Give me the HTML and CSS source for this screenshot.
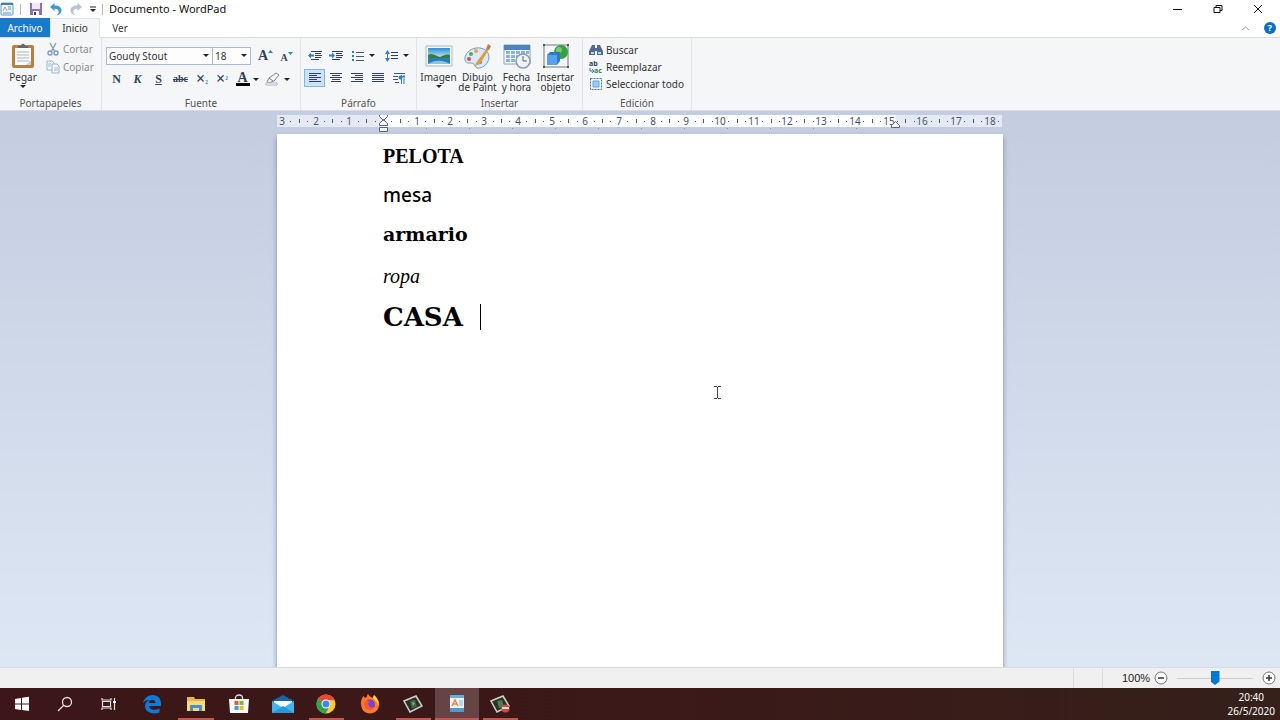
FILE: index.html
```html
<!DOCTYPE html>
<html lang="es">
<head>
<meta charset="utf-8">
<title>Documento - WordPad</title>
<link rel="stylesheet" href="styles.css">
</head>
<body>
<header class="titlebar">
  <svg class="app-icon" viewBox="0 0 14 14" width="14" height="14"><rect x="1" y="1" width="12" height="12" rx="1" fill="#e9f4fb" stroke="#5d9cc8"/><path d="M1 2h12" stroke="#4b7ea3" stroke-width="2"/><path d="M3 9l2-4 2 4" fill="none" stroke="#e88f57"/><path d="M8 5h3M8 7h3M3 11h8" stroke="#5aa2d3"/></svg>
  <span class="bar-sep"></span>
  <button class="qat" aria-label="Guardar"><svg viewBox="0 0 14 14" width="14" height="14"><path d="M1 1h12v12H1z" fill="#8c70b4"/><path d="M3 1h8v6H3z" fill="#eeeaf6"/><path d="M4 9h6v4H4z" fill="#fff"/><path d="M5 10h2v3H5z" fill="#4d3c74"/></svg></button>
  <button class="qat" aria-label="Deshacer"><svg viewBox="0 0 14 14" width="14" height="14"><path d="M1 5l4.500-4v2.500c5 0 7 2 7 5 0 2.500-2 4.500-5 5 2-1.500 2.600-3 2-4.400C9 7.500 8 6.800 5.500 6.800V9z" fill="#3b9bd4"/></svg></button>
  <button class="qat" aria-label="Rehacer"><svg viewBox="0 0 14 14" width="14" height="14"><path d="M13 5L8.500 1v2.500c-5 0-7 2-7 5 0 2.500 2 4.500 5 5-2-1.500-2.600-3-2-4.400C5 7.500 6 6.800 8.500 6.800V9z" fill="#b9c3d0"/></svg></button>
  <button class="qat qat-more" aria-label="Personalizar"><svg viewBox="0 0 8 7" width="8" height="7"><path d="M1 1h6" stroke="#222"/><path d="M1 3h6L4 6z" fill="#222"/></svg></button>
  <span class="bar-sep"></span>
  <h1 class="title">Documento - WordPad</h1>
  <div class="window-buttons">
    <button aria-label="Minimizar"><svg viewBox="0 0 10 10" width="10" height="10"><path d="M0 5.500h9" stroke="#111"/></svg></button>
    <button aria-label="Restaurar"><svg viewBox="0 0 10 10" width="10" height="10"><path d="M1 3.500h6v5H1zM3 3V1.500h6v5H7" fill="none" stroke="#111"/></svg></button>
    <button aria-label="Cerrar"><svg viewBox="0 0 10 10" width="10" height="10"><path d="M1 1l8 8M9 1l-8 8" stroke="#111"/></svg></button>
  </div>
</header>

<nav class="tabs">
  <button class="tab tab-file">Archivo</button>
  <button class="tab tab-active">Inicio</button>
  <button class="tab">Ver</button>
  <div class="tab-tools">
    <button aria-label="Minimizar cinta"><svg viewBox="0 0 9 6" width="9" height="6"><path d="M1 5l3.500-3L8 5" fill="none" stroke="#999"/></svg></button>
    <button class="help" aria-label="Ayuda">?</button>
  </div>
</nav>

<section class="ribbon">
  <div class="group g-clip">
    <div class="group-body">
      <button class="big paste"><svg viewBox="0 0 24 26" width="24" height="26"><rect x="1" y="2" width="22" height="23" rx="2" fill="#b9803f"/><path d="M4 5h16v17H4z" fill="#fbfcfe"/><path d="M6 9h12M6 12h12M6 15h12M6 18h12" stroke="#aab4c4"/><path d="M15 22l5-5v5z" fill="#c8d2e0"/><path d="M7 5V3h3c0-3 4-3 4 0h3v2z" fill="#5f6670"/></svg><span>Pegar</span><i class="arrow"></i></button>
      <div class="stack clip-stack">
        <button class="line dim"><svg viewBox="0 0 14 14" width="14" height="14"><path d="M4 1l5 9M10 1L5 10" stroke="#8fa0b8" stroke-width="1.500"/><circle cx="4" cy="11" r="2" fill="none" stroke="#7b9cc6" stroke-width="1.400"/><circle cx="10" cy="11" r="2" fill="none" stroke="#7b9cc6" stroke-width="1.400"/></svg>Cortar</button>
        <button class="line dim"><svg viewBox="0 0 14 14" width="14" height="14"><path d="M1 1h5l2 2v7H1z" fill="#f5f8fc" stroke="#a3b0c4"/><path d="M6 4h5l2 2v7H6z" fill="#f5f8fc" stroke="#a3b0c4"/><path d="M2 4h3M2 6h3M8 8h4M8 10h4" stroke="#9fb8da"/></svg>Copiar</button>
      </div>
    </div>
    <h2>Portapapeles</h2>
  </div>

  <div class="group g-font">
    <div class="group-body rows">
      <div class="row">
        <label class="combo combo-font"><select aria-label="Fuente"><option>Goudy Stout</option></select><i class="arrow"></i></label>
        <label class="combo combo-size"><select aria-label="Tamaño"><option>18</option></select><i class="arrow"></i></label>
        <button class="tool grow serif">A<svg viewBox="0 0 5 4" width="5" height="4"><path d="M0 3l2.500-3L5 3z" fill="#2f7fc3"/></svg></button>
        <button class="tool shrink serif">A<svg viewBox="0 0 5 4" width="5" height="4"><path d="M0 0l2.500 3L5 0z" fill="#2f7fc3"/></svg></button>
      </div>
      <div class="row">
        <button class="tool serif b">N</button>
        <button class="tool serif k">K</button>
        <button class="tool serif u">S</button>
        <button class="tool serif st">abc</button>
        <button class="tool serif x">×<sub>₂</sub></button>
        <button class="tool serif x">×<sup>²</sup></button>
        <button class="tool wide serif colour"><span>A</span><i class="arrow"></i></button>
        <button class="tool wide" aria-label="Resaltar"><svg viewBox="0 0 16 14" width="16" height="14"><path d="M2 10l2-4 7-5 3 2-5 6-5 2z" fill="#f1f4f8" stroke="#7587a0"/><path d="M4 6l4 3" stroke="#7587a0"/><path d="M1 11h11v2H1z" fill="#fff" stroke="#b0b8c2"/></svg><i class="arrow"></i></button>
      </div>
    </div>
    <h2>Fuente</h2>
  </div>

  <div class="group g-par">
    <div class="group-body rows">
      <div class="row">
        <button class="tool" aria-label="Reducir sangría"><svg viewBox="0 0 14 12" width="14" height="12"><path d="M3 1.500h11M7 3.500h6M7 5.500h7M7 7.500h6M3 9.500h8" stroke="#34405a"/><path d="M0 5.500l3-3v2h3v2H3v2z" fill="#2f7fc3"/></svg></button>
        <button class="tool" aria-label="Aumentar sangría"><svg viewBox="0 0 14 12" width="14" height="12"><path d="M3 1.500h11M7 3.500h6M7 5.500h7M7 7.500h6M3 9.500h8" stroke="#34405a"/><path d="M6 5.500l-3-3v2H0v2h3v2z" fill="#2f7fc3"/></svg></button>
        <button class="tool wide" aria-label="Lista"><svg viewBox="0 0 14 12" width="14" height="12"><path d="M5 2.500h8M5 6.500h8M5 10.500h8" stroke="#4b5468"/><path d="M1 1h2v2H1zM1 5h2v2H1zM1 9h2v2H1z" fill="#2f7fc3"/></svg><i class="arrow"></i></button>
        <button class="tool wide spacing" aria-label="Interlineado"><svg viewBox="0 0 14 12" width="14" height="12"><path d="M6 2.500h7M6 5.500h7M6 8.500h7" stroke="#34405a"/><path d="M0 4l2.500-4L5 4H3v4h2l-2.500 4L0 8h2V4z" fill="#2f7fc3"/></svg><i class="arrow"></i></button>
      </div>
      <div class="row">
        <button class="tool on" aria-label="Izquierda"><svg viewBox="0 0 14 12" width="14" height="12"><path d="M1 1.500h12M1 3.500h8M1 5.500h12M1 7.500h8M1 9.500h12" stroke="#34405a"/></svg></button>
        <button class="tool" aria-label="Centrar"><svg viewBox="0 0 14 12" width="14" height="12"><path d="M1 1.500h12M3 3.500h8M1 5.500h12M3 7.500h8M2 9.500h10" stroke="#34405a"/></svg></button>
        <button class="tool" aria-label="Derecha"><svg viewBox="0 0 14 12" width="14" height="12"><path d="M1 1.500h12M5 3.500h8M1 5.500h12M5 7.500h8M1 9.500h12" stroke="#34405a"/></svg></button>
        <button class="tool" aria-label="Justificar"><svg viewBox="0 0 14 12" width="14" height="12"><path d="M1 1.500h12M1 3.500h12M1 5.500h12M1 7.500h12M1 9.500h12" stroke="#34405a"/></svg></button>
        <button class="tool" aria-label="Párrafo"><svg viewBox="0 0 14 12" width="14" height="12"><path d="M2 1.500h11M1 4.500h5M1 7.500h5M3 10.500h4" stroke="#4b5468"/><path d="M12 3v9M9.500 3v9M8 4.500h5" stroke="#2f7fc3"/><circle cx="8.500" cy="5.500" r="2" fill="#2f7fc3"/></svg></button>
      </div>
    </div>
    <h2>Párrafo</h2>
  </div>

  <div class="group g-ins">
    <div class="group-body">
      <button class="big"><svg viewBox="0 0 28 26" width="28" height="26"><defs><linearGradient id="sky" x1="0" y1="0" x2="0" y2="1"><stop offset="0" stop-color="#2d8fd5"/><stop offset="1" stop-color="#c9eaf4"/></linearGradient></defs><path d="M1 3h26v20H1z" fill="#f8fbfd" stroke="#a9b7c4"/><path d="M3 5h22v10H3z" fill="url(#sky)"/><path d="M3 12c4-3 8 1 12 2 4-2 7-3 10-2v4H3z" fill="#3d7846"/><path d="M3 15h22v6H3z" fill="#2a7cb7"/><path d="M3 21c6-4 12-4 18-2l4 2z" fill="#8dc5dc"/></svg><span>Imagen</span><i class="arrow"></i></button>
      <button class="big"><svg viewBox="0 0 28 26" width="28" height="26"><path d="M12 5C5 6 0 12 1 17c1 4 5 3 7 3 3 0 2 4 5 5 6 1 12-5 12-11 0-6-6-10-13-9z" fill="#d9e9f6" stroke="#6e9fc6"/><circle cx="5" cy="16" r="2" fill="#d94d3f"/><circle cx="7" cy="11" r="2" fill="#5bad45"/><circle cx="12" cy="8" r="2" fill="#eea443"/><circle cx="16" cy="19" r="2" fill="#3a7ec6"/><path d="M12 20L23 5l2 1-9 15-5 2z" fill="#e29b3c"/><path d="M22 6l2-5 3 2-2 4z" fill="#c37a45"/></svg><span>Dibujo<br>de Paint</span></button>
      <button class="big"><svg viewBox="0 0 28 26" width="28" height="26"><path d="M1 2h26v19H1z" fill="#fff" stroke="#8aa0b8"/><path d="M1 2h26v5H1z" fill="#4b83bb"/><path d="M3 8h4v3H3zM8 8h4v3H8zM13 8h4v3h-4zM18 8h4v3h-4zM23 8h3v3h-3zM3 12h4v3H3zM8 12h4v3H8zM13 12h4v3h-4zM3 16h4v3H3zM8 16h4v3H8z" fill="#84b5df"/><circle cx="20" cy="18" r="7" fill="#eef3f7" stroke="#8c99a8" stroke-width="1.500"/><path d="M20 13v5h4" fill="none" stroke="#59687b"/></svg><span>Fecha<br>y hora</span></button>
      <button class="big"><svg viewBox="0 0 28 26" width="28" height="26"><path d="M2 2h24v22H2z" fill="#f4f7fa" stroke="#777"/><circle cx="19" cy="9" r="7" fill="#35a13f"/><circle cx="17" cy="7" r="3" fill="#76c871"/><path d="M5 12l3-3h10v9l-3 4H5z" fill="#2e78cb"/><path d="M5 12h10v10H5z" fill="#58a2ea"/><path d="M1 1h2v2H1zM25 1h2v2h-2zM1 23h2v2H1zM25 23h2v2h-2z" fill="#555"/></svg><span>Insertar<br>objeto</span></button>
    </div>
    <h2>Insertar</h2>
  </div>

  <div class="group g-edit">
    <div class="group-body">
      <div class="stack">
        <button class="line"><svg viewBox="0 0 14 14" width="14" height="14"><path d="M3 2h3v3h2V2h3l3 6v4H8V8H6v4H0V8z" fill="#536b8f"/><path d="M2 9h3v2H2zM9 9h3v2H9z" fill="#bdd0e7"/></svg>Buscar</button>
        <button class="line"><svg viewBox="0 0 14 14" width="14" height="14"><text class="swap-from" x="0" y="6">ab</text><text class="swap-to" x="5" y="13">ac</text><path d="M1 8v3h3M3 9l2 2-2 2" fill="none" stroke="#2f7fc3"/></svg>Reemplazar</button>
        <button class="line"><svg viewBox="0 0 14 14" width="14" height="14"><path d="M1.500 1.500h11v11h-11z" fill="none" stroke="#3d75b5" stroke-dasharray="2 1"/><path d="M4 4h6v6H4z" fill="#9bcbf5" stroke="#60a5e0"/></svg>Seleccionar todo</button>
      </div>
    </div>
    <h2>Edición</h2>
  </div>
</section>

<main class="workspace">
  <div class="sheet">
    <svg class="ruler" viewBox="0 0 725 19" width="725" height="19" role="img" aria-label="Regla">
      <path d="M0 0h106v12H0zM619 0h106v12H619z" fill="#e4e9f3"/>
      <path d="M106 0h513v12H106z" fill="#fcfdff"/>
      <g id="marks"></g>
      <path d="M102.500-.5h8v2l-4 4-4-4zM102.500 10.500v-2l4-4 4 4v2zM102.500 12.500h8v4h-8z" fill="#f4f6fa" stroke="#57647c"/>
      <path d="M614.500 12.500v-2l4-4 4 4v2z" fill="#f4f6fa" stroke="#57647c"/>
    </svg>
    <article class="paper" contenteditable="true" spellcheck="false" aria-label="Documento">
      <p class="algerian">PELOTA</p>
      <p class="comic">mesa</p>
      <p class="bold-serif">armario</p>
      <p class="script">ropa</p>
      <p class="stout">CASA<span class="caret"></span></p>
    </article>
  </div>
  <svg class="pointer" viewBox="0 0 7 13" width="7" height="13"><path d="M0 .5h3M4 .5h3M3.500 1v11M0 12.500h3M4 12.500h3" stroke="#444"/></svg>
</main>

<footer class="status">
  <span class="cell"></span>
  <div class="zoom">
    <label for="zoom">100%</label>
    <button aria-label="Alejar"><svg viewBox="0 0 14 14" width="14" height="14"><circle cx="7" cy="7" r="6" fill="#fafafa" stroke="#777"/><path d="M4 7h6" stroke="#333" stroke-width="1.500"/></svg></button>
    <input id="zoom" type="range" min="0" max="100" value="50">
    <button aria-label="Acercar"><svg viewBox="0 0 14 14" width="14" height="14"><circle cx="7" cy="7" r="6" fill="#fafafa" stroke="#777"/><path d="M4 7h6M7 4v6" stroke="#333" stroke-width="1.500"/></svg></button>
  </div>
</footer>

<nav class="taskbar">
  <div class="apps">
    <button aria-label="Inicio"><svg viewBox="0 0 20 20" width="20" height="20"><path d="M3 5l6-1v5.500H3zM10 3.800l7-1v6.700h-7zM3 10.500h6V16l-6-1zM10 10.500h7V17l-7-1z" fill="#fff"/></svg></button>
    <button aria-label="Buscar"><svg viewBox="0 0 20 20" width="20" height="20"><circle cx="12" cy="8" r="4.500" fill="none" stroke="#eadede" stroke-width="1.300"/><path d="M9 11l-6 6" stroke="#eadede" stroke-width="1.300"/></svg></button>
    <button aria-label="Vista de tareas"><svg viewBox="0 0 20 20" width="20" height="20"><path d="M3 4v2h9V4M3 16v-2h9v2M3.500 7.500h8v5h-8zM15.500 4v12" fill="none" stroke="#eadede" stroke-width="1.200"/><path d="M14 7h3v2h-3z" fill="#fff"/></svg></button>
    <button aria-label="Edge"><svg viewBox="0 0 20 20" width="20" height="20"><path d="M1 9C2 4 6 1 10.500 1 16 1 19 5 19 9.500V12H7c.5 4 6 5 10.500 2.500v4C10 21 3 18 3 12c0-3 2-5 4.500-6C4.500 6 2.500 7 1 9zm6 0h6.500C13.500 4.500 7 5 7 9z" fill="#0f7bd8"/></svg></button>
    <button class="open" aria-label="Explorador"><svg viewBox="0 0 20 20" width="20" height="20"><path d="M1 3h7l1 2h10v12H1z" fill="#e9b648"/><path d="M1 7h18v10H1z" fill="#fbd978"/><path d="M4 17v-6h12v6h-3v-3H7v3z" fill="#3f91cf"/></svg></button>
    <button aria-label="Store"><svg viewBox="0 0 20 20" width="20" height="20"><path d="M6.500 6V4c0-4 7-4 7 0v2" fill="none" stroke="#ddd" stroke-width="1.300"/><path d="M0 5h20l-1 14H1z" fill="#fafafa"/><path d="M5.500 7h4v4h-4z" fill="#ea5635"/><path d="M10.500 7h4v4h-4z" fill="#79b93b"/><path d="M5.500 12h4v4h-4z" fill="#2da3e1"/><path d="M10.500 12h4v4h-4z" fill="#f4b92f"/></svg></button>
    <button aria-label="Correo"><svg viewBox="0 0 22 20" width="22" height="20"><path d="M0 7l11-6 11 6v12H0z" fill="#1464ae"/><path d="M2 7h18v6H2z" fill="#f5fbff"/><path d="M0 7l11 7 11-7v12H0z" fill="#43b4ec"/><path d="M0 19l11-7 11 7z" fill="#229ae0"/></svg></button>
    <button class="open" aria-label="Chrome"><svg viewBox="0 0 20 20" width="20" height="20"><circle cx="10" cy="10" r="9.500" fill="#fbc932"/><path d="M10 10L1.800 5A9.500 9.500 0 0 1 18.500 6H10z" fill="#e54738"/><path d="M10 10L1.800 5a9.500 9.500 0 0 0 7.700 14.500l4-7z" fill="#2da44f"/><circle cx="10" cy="10" r="4.500" fill="#fff"/><circle cx="10" cy="10" r="3.500" fill="#4286ed"/></svg></button>
    <button aria-label="Firefox"><svg viewBox="0 0 20 20" width="20" height="20"><path d="M1 9c0-3 1-5 2.500-7L5 4l2-1c0-1 0-2 1-3 1 2 3 3 5 4l1-3c3 3 5 5 5 9 0 6-4 9.500-9 9.500S1 16 1 9z" fill="#ff7a20"/><path d="M13 4l1-3c4 4 5 7 4.500 11-1-4-3-5-5.500-8z" fill="#ffdb43"/><circle cx="10" cy="10.500" r="5" fill="#8b35c4"/><path d="M4 8c3-2 6-1 7 1-3 0-3 2-1 4 2 1 4 0 5-1-1 4-8 5-10 1z" fill="#f2563c"/><circle cx="11" cy="10" r="2.500" fill="#7147d5"/></svg></button>
    <button class="open" aria-label="Grabación"><svg viewBox="0 0 20 20" width="20" height="20"><path d="M1 7l12-5 6 10-12 6z" fill="#29332c" stroke="#d1d2cd" stroke-width="1.500"/><path d="M7 7l5-1 2 7-5 1z" fill="#466b3b"/><path d="M9 8l3 1-2 3z" fill="#8cab72"/></svg></button>
    <button class="open active" aria-label="WordPad"><svg viewBox="0 0 20 20" width="20" height="20"><path d="M3 2h14v16H3z" fill="#e9f4fc"/><path d="M3 1h14v3H3z" fill="#69aedb"/><path d="M5 12l3-6 3 6M6 10h4" fill="none" stroke="#ef8732" stroke-width="1.500"/><path d="M12 7h4M12 9h4M12 11h4" stroke="#85b7db"/><path d="M3 14h14v4H3z" fill="#5396d2"/></svg></button>
    <button class="open" aria-label="Grabador"><svg viewBox="0 0 20 20" width="20" height="20"><path d="M1 7l12-5 6 10-12 6z" fill="#29332c" stroke="#d1d2cd" stroke-width="1.500"/><path d="M7 7l5-1 2 7-5 1z" fill="#527d45"/><circle cx="15.500" cy="14.500" r="4" fill="#d84540"/><path d="M12 13h7v2h-7z" fill="#f3dddd"/></svg></button>
  </div>
  <div class="clock"><time>20:40</time><time>26/5/2020</time></div>
</nav>
<script src="ruler.js"></script>
</body>
</html>
```
FILE: ruler.js
```js
const marks = document.getElementById("marks");
const ns = "http://www.w3.org/2000/svg";
const perCm = 33.7;
const origin = 106;

function add(name, attrs, text) {
  const el = document.createElementNS(ns, name);
  for (const key in attrs) el.setAttribute(key, attrs[key]);
  if (text) el.textContent = text;
  marks.appendChild(el);
}

for (let n = -3; n <= 18; n++) {
  const at = (part) => Math.round(origin + (n + part) * perCm);
  if (n !== 0) add("text", { x: at(0), y: 10, class: "ruler-number" }, String(Math.abs(n)));
  add("rect", { x: at(0.25), y: 6, width: 1, height: 1, class: "ruler-mark" });
  if (n === 18) break;
  add("rect", { x: at(0.5), y: 4, width: 1, height: 4, class: "ruler-mark" });
  add("rect", { x: at(0.75), y: 6, width: 1, height: 1, class: "ruler-mark" });
}

for (let x = 149; x < 619; x += 43) {
  add("rect", { x, y: 13, width: 1, height: 1, class: "ruler-stop" });
}
```
FILE: styles.css
```css
* { box-sizing: border-box; }

body {
  margin: 0;
  height: 100vh;
  display: flex;
  flex-direction: column;
  overflow: hidden;
  font: 10px/12px "Noto Sans", sans-serif;
  color: #333;
  background: #fff;
}

button, select {
  font: inherit;
  color: inherit;
  background: none;
  border: 0;
  padding: 0;
  margin: 0;
}

svg { display: block; flex: none; }
h1, h2, p { margin: 0; font-weight: 400; }

.titlebar { display: flex; align-items: center; height: 18px; }
.bar-sep { width: 1px; height: 11px; background: #bbb; margin: 0 5px 0 6px; }
.qat { width: 20px; display: flex; justify-content: center; }
.qat-more { width: 14px; }
.title { font-size: 11px; line-height: 16px; color: #111; }
.titlebar .bar-sep:nth-of-type(2) { margin: 0 6px 0 2px; }
.window-buttons { margin-left: auto; display: flex; padding-right: 2px; }
.window-buttons button { width: 40px; height: 16px; display: flex; justify-content: center; align-items: center; }

.tabs { display: flex; height: 20px; border-bottom: 1px solid #dadbdc; }
.tab { width: 40px; height: 19px; }
.tab-file { width: 50px; background: #1979ca; color: #fff; }
.tab-active { width: 50px; height: 20px; padding-bottom: 2px; background: #f4f6f8; border: 1px solid #e3e4e6; border-bottom: 0; }
.tab-tools { margin-left: auto; display: flex; align-items: center; gap: 14px; padding-right: 4px; }
.help { width: 12px; height: 12px; border-radius: 50%; background: #0d6fc2; color: #fff; font-weight: 700; font-size: 9px; }

.ribbon { display: flex; height: 73px; background: #f4f6f8; border-bottom: 1px solid #d8dae8; }
.group { display: flex; flex-direction: column; padding-top: 3px; border-right: 1px solid #e1e3e8; }
.group h2 { font-size: 10px; line-height: 14px; text-align: center; color: #555; }
.group-body { display: flex; flex: 1; }
.g-clip { width: 102px; }
.g-font { width: 199px; }
.g-par { width: 116px; }
.g-ins { width: 166px; }
.g-edit { width: 109px; }

.arrow { width: 0; height: 0; border: 3px solid transparent; border-top-color: #222; border-bottom: 0; }
.big { width: 39px; display: flex; flex-direction: column; align-items: center; line-height: 10px; white-space: nowrap; padding-top: 2px; }
.big span { margin-top: 3px; }
.big .arrow { margin-top: 3px; }
.g-ins .group-body { padding: 0 0 0 2px; }
.paste { width: 46px; }
.stack { display: flex; flex-direction: column; gap: 3px; }
.clip-stack { padding-top: 1px; gap: 4px; }
.line { display: flex; align-items: center; gap: 3px; height: 14px; white-space: nowrap; }
.dim { color: #8c8c8c; }
.g-edit .group-body { padding: 2px 0 0 6px; }
.swap-from, .swap-to { font: 700 7px "Noto Sans", sans-serif; fill: #34405a; }
.swap-to { fill: #2f8a48; }

.rows { flex-direction: column; gap: 5px; padding: 6px 0 0 4px; }
.row { display: flex; align-items: center; height: 18px; }
.combo { display: flex; position: relative; border: 1px solid #a9bad6; height: 18px; background: #fdfdfe; }
.combo select { appearance: none; width: 100%; padding-left: 2px; }
.combo .arrow { position: absolute; right: 3px; top: 6px; }
.combo-font { width: 107px; }
.combo-size { width: 38px; border-left: 0; }
.tool { width: 21px; height: 18px; display: flex; align-items: center; justify-content: center; }
.wide { width: 30px; gap: 3px; }
.g-par .rows { padding-left: 3px; }
.g-par .row { height: 17px; }
.g-par .wide { width: 34px; gap: 4px; }
.on { background: #cce2f8; border: 1px solid #82b4e6; }
.serif { font-family: "Liberation Serif", serif; font-weight: 700; font-size: 12px; color: #34405a; }
.grow { font-size: 14px; margin-left: 4px; align-items: flex-start; padding-top: 3px; }
.shrink { font-size: 10px; align-items: flex-start; padding-top: 5px; }
.k { font-style: italic; }
.u { text-decoration: underline; }
.st { font-size: 10px; text-decoration: line-through; width: 23px; }
.x { font-size: 16px; width: 20px; }
.x sub, .x sup { font-size: 9px; color: #2f7fc3; }
.colour span { width: 14px; line-height: 11px; font-size: 14px; border-bottom: 3px solid #000; }

.workspace {
  position: relative;
  flex: 1;
  min-height: 0;
  display: flex;
  justify-content: center;
  overflow: hidden;
  background: linear-gradient(#c4cce0, #dde7f4);
}
.sheet { display: flex; flex-direction: column; width: 726px; padding-top: 4px; }
.ruler-number { font: 10px "Noto Sans", sans-serif; fill: #4a556b; text-anchor: middle; }
.ruler-mark { fill: #4d5870; }
.ruler-stop { fill: #8995ad; }
.paper { flex: 1; padding: 9px 106px; background: #fff; box-shadow: 0 3px 5px #7888ac; color: #000; outline: 0; }
.paper p { height: 39px; line-height: 26px; white-space: nowrap; }
.algerian { font-family: "Liberation Serif", serif; font-size: 20px; }
.comic { font-family: "Noto Sans", sans-serif; font-size: 19px; }
.bold-serif { font-family: "DejaVu Serif", serif; font-size: 19px; }
.script { font-family: "Liberation Serif", serif; font-size: 20px; font-style: italic; }
.stout { font-family: "DejaVu Serif", serif; font-size: 26px; }
.paper .algerian, .paper .bold-serif, .paper .stout { font-weight: 700; }
.paper .comic { font-weight: 500; }
.paper .script { height: 44px; line-height: 32px; }
.paper .stout { display: flex; width: 98px; justify-content: space-between; }
.caret { width: 1px; height: 26px; background: #000; }
.pointer { position: absolute; left: 714px; top: 275px; }

.status { display: flex; justify-content: flex-end; height: 21px; background: #f0f0f0; border-top: 1px solid #d7dbe2; }
.cell { width: 30px; border: solid #dcdcdc; border-width: 0 1px; }
.zoom { display: flex; align-items: center; width: 177px; padding-left: 19px; font-size: 11px; color: #222; }
.zoom label { width: 32px; font-family: "Liberation Sans", sans-serif; }
.zoom input { appearance: none; width: 76px; height: 14px; margin: 0 9px; background: linear-gradient(#cfcfcf, #cfcfcf) center / 100% 1px no-repeat; }
.zoom input::-webkit-slider-thumb { appearance: none; width: 9px; height: 14px; background: #0078d7; clip-path: polygon(0 0, 100% 0, 100% 75%, 50% 100%, 0 75%); }

.taskbar { display: flex; justify-content: space-between; height: 32px; background: linear-gradient(90deg, #3c1618, #3b1918 50%, #35201a); color: #fff; }
.apps { display: grid; grid-template-columns: repeat(12, 1fr); width: 522px; }
.apps button { display: flex; align-items: center; justify-content: center; position: relative; }
.open::after { content: ""; position: absolute; left: 4px; right: 4px; bottom: 0; height: 2px; background: #c45550; }
.apps .active { background: #664446; }
.apps .active::after { left: 0; right: 0; }
.clock { display: flex; flex-direction: column; align-items: center; padding: 2px 5px 0 0; line-height: 14px; }
```
